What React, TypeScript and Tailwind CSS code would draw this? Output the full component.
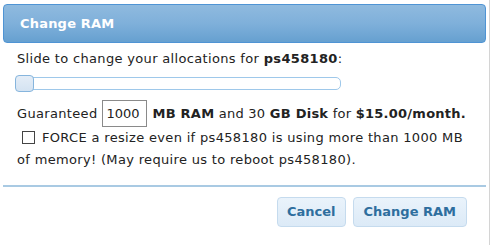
import React from "react";

export default function App() {
  return (
    <div className="w-[492px] h-[245px] bg-white relative overflow-hidden" style={{ fontFamily: '"DejaVu Sans", Verdana, sans-serif' }}>
      <div className="w-[490px] h-[245px] border-r border-[#d4d4d4] flex flex-col">
        <div className="mx-[3px] mt-[4px] h-[39px] rounded-[4px] border border-[#4f94d4] bg-gradient-to-b from-[#8fbadf] via-[#7fb0da] to-[#66a0d0] flex items-center pl-[16px]">
          <span className="text-white font-bold text-[13px] tracking-[0.2px]">Change RAM</span>
        </div>
        <div className="px-[17px] pt-[8px] text-[13px] text-[#222] tracking-[0.33px]">
          <div className="leading-[16px]">Slide to change your allocations for <b>ps458180</b>:</div>
          <div className="relative mt-[10px] ml-[-2px] w-[326px] h-[13px] rounded-[5px] border border-[#9ec8ea] bg-white">
            <div className="absolute left-[-1px] top-[-3px] w-[19px] h-[17px] rounded-[4px] border border-[#86b5dd] bg-gradient-to-b from-[#e4edf7] to-[#d4e3f2]" />
          </div>
          <div className="flex items-center mt-[10px] whitespace-nowrap">
            <span>Guaranteed</span>
            <span className="ml-[5px] mr-[5px] w-[45px] h-[27px] border border-[#8a8a8a] flex items-center pl-[3px] tracking-normal">1000</span>
            <span className="tracking-[0.25px]"><b>MB RAM</b> and 30 <b>GB Disk</b> for <b>$15.00/month.</b></span>
          </div>
          <div className="mt-[0px] leading-[22px]">
            <span className="inline-block w-[13px] h-[13px] border border-[#444] mr-[7px] ml-[5px] align-[-2px]" />
            FORCE a resize even if ps458180 is using more than 1000 MB of memory! (May require us to reboot ps458180).
          </div>
        </div>
        <div className="mx-[3px] mt-[14px] border-t-2 border-[#a9cae3]" />
        <div className="flex justify-end gap-[7px] pr-[22px] pt-[10px]">
          <button className="h-[30px] px-[9px] rounded-[4px] border border-[#c5dbee] bg-gradient-to-b from-[#eaf3fb] to-[#dceaf7] text-[#2e6e9e] font-bold text-[13px]">Cancel</button>
          <button className="h-[30px] px-[10px] rounded-[4px] border border-[#c5dbee] bg-gradient-to-b from-[#eaf3fb] to-[#dceaf7] text-[#2e6e9e] font-bold text-[13px]">Change RAM</button>
        </div>
      </div>
    </div>
  );
}
